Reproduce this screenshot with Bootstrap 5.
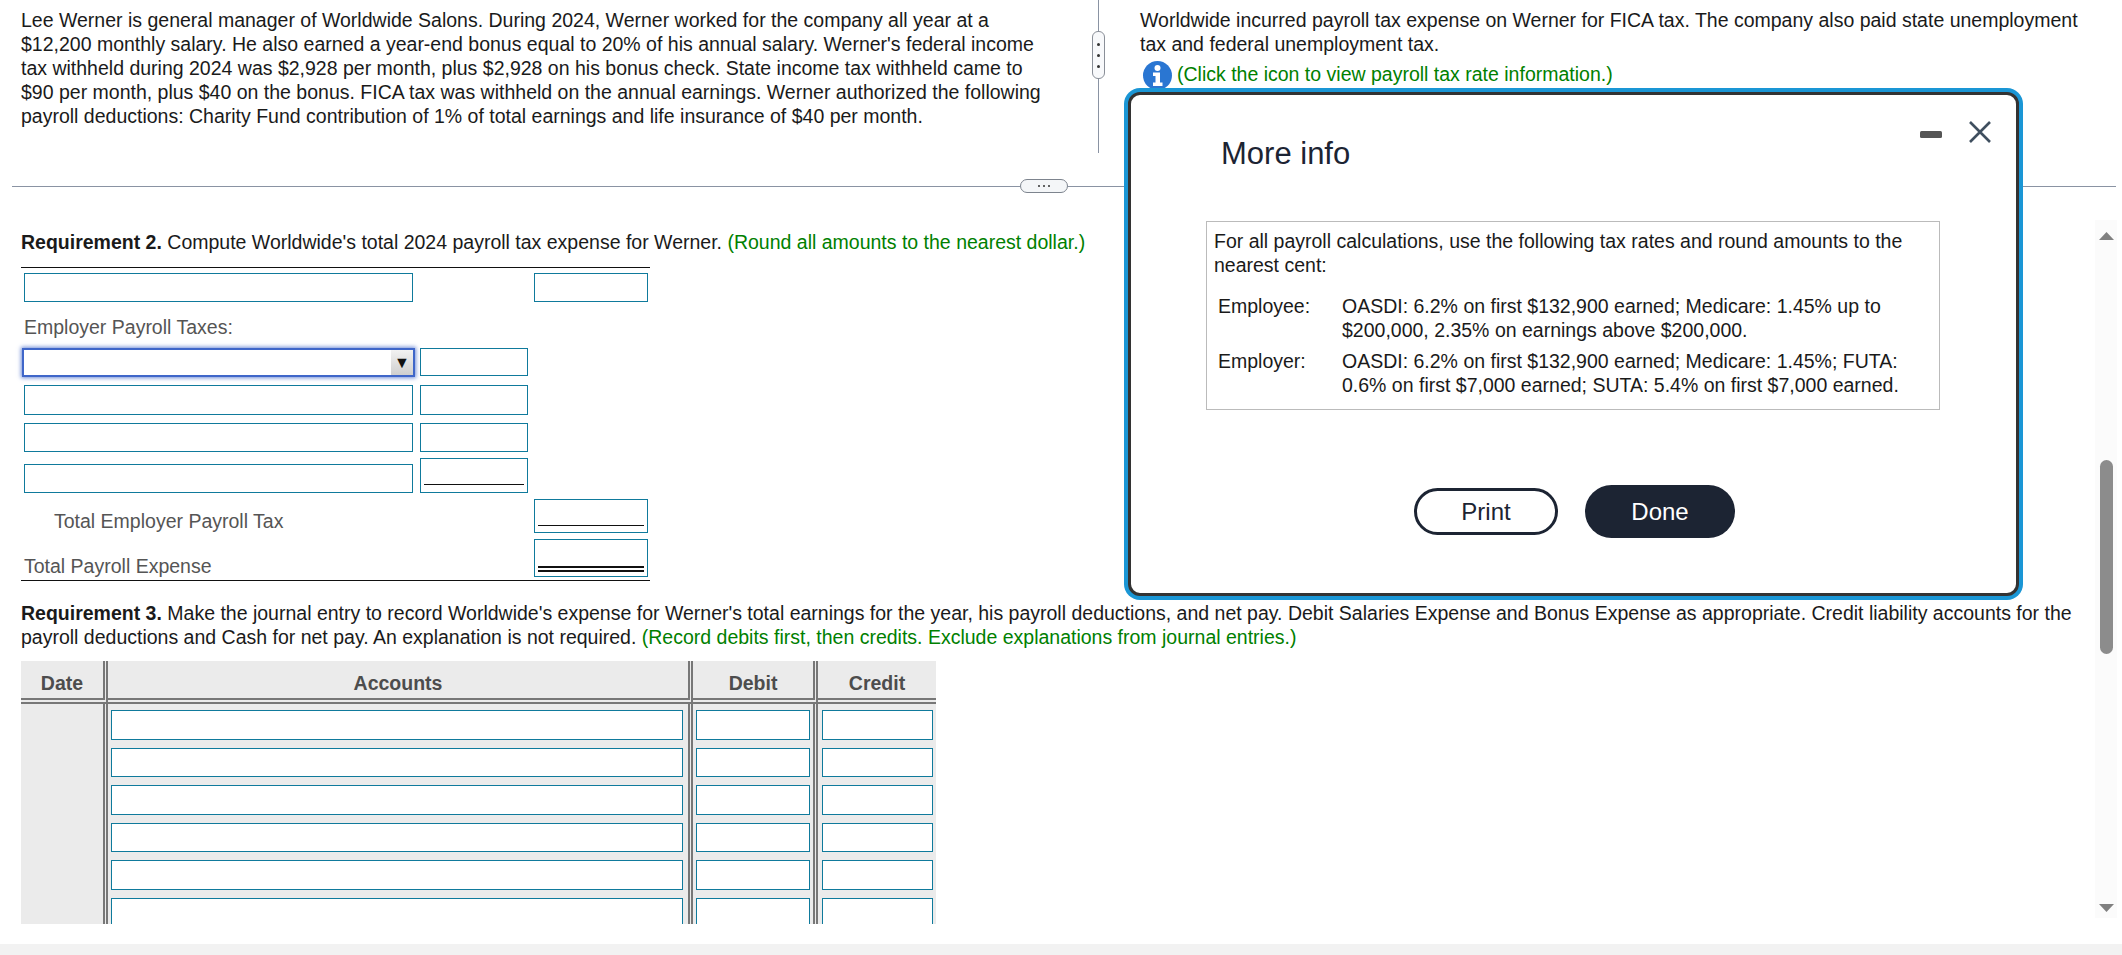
<!DOCTYPE html>
<html lang="en">
<head>
  <meta charset="UTF-8">
  <meta name="viewport" content="width=device-width, initial-scale=1.0">
  <title>Payroll tax expense</title>
  <link href="https://cdn.jsdelivr.net/npm/bootstrap@5.3.0/dist/css/bootstrap.min.css" rel="stylesheet">
  <style>
    html, body { height: 955px; overflow: hidden; }
    body { font-family: "Liberation Sans", Arial, sans-serif; font-size: 19.5px; line-height: 24px; color: #1a1a1a; background: #fff; }
    .page-main { height: 944px; }
    .page-foot { height: 11px; background: #f2f2f2; }
    .top-pane { height: 153px; }
    .story-left { width: 1092px; padding: 8px 45px 0 21px; }
    .split-v { width: 13px; }
    .split-line { width: 1px; background: #8a93a3; }
    .split-line.first { height: 31px; }
    .split-grip { width: 13px; height: 48px; border: 1px solid #8a8f98; border-radius: 6px; background: #f8f9fb; }
    .grip-dot { width: 3px; height: 3px; background: #333; border-radius: 50%; }
    .story-right { width: 990px; padding: 8px 0 0 35px; }
    .info-line { margin-top: 6px; margin-left: 3px; gap: 5px; }
    .info-line svg { margin-top: -1px; }
    .hint { color: #008000; }
    .rule-row { height: 14px; margin: 26px 6px 0 12px; }
    .rule-line { height: 1px; background: #8a93a3; }
    .rule-line.first { width: 1008px; flex: none; }
    .rule-grip { width: 48px; height: 14px; border: 1px solid #7d848e; border-radius: 7px; background: #f4f6f8; gap: 3px; }
    .rule-grip .grip-dot { width: 2px; height: 2px; }
    .lower-pane { height: 751px; }
    .work-col { width: 2095px; padding-left: 21px; }
    .req-two { margin-top: 37px; }
    .calc-box { width: 629px; margin-top: 13px; padding: 0 0 3px 3px; border-top: 1px solid #111; border-bottom: 1px solid #111; }
    .calc-row { gap: 7px; }
    .calc-wide { width: 389px; flex: none; }
    .calc-mid { width: 108px; flex: none; }
    .calc-far { width: 114px; margin-left: 114px; flex: none; }
    .calc-far2 { width: 114px; margin-left: auto; margin-right: 2px; flex: none; }
    .fld.form-control { border: 1px solid #0f7a9c; border-radius: 0; padding: 0; min-height: 0; background: #fff; }
    .calc-label { color: #555; white-space: nowrap; }
    .calc-indent { padding-left: 30px; }
    .calc-bump { margin-top: 10px; }
    .calc-drop { margin-bottom: -1px; }
    .h-29 { height: 29px; }
    .h-28 { height: 28px; }
    .row-a { margin-top: 5px; height: 29px; }
    .row-lbl { margin-top: 13px; height: 24px; }
    .row-b { margin-top: 9px; height: 29px; }
    .row-c { margin-top: 8px; height: 30px; }
    .row-d { margin-top: 8px; height: 29px; }
    .row-e { margin-top: 6px; height: 35px; }
    .row-f { margin-top: 6px; height: 34px; }
    .row-g { margin-top: 6px; height: 38px; }
    .combo { width: 393px; height: 29px; margin: 0 -2px 0 -2px; flex: none; border: 2px solid #3f66c9; box-shadow: 0 0 4px 1px rgba(63,102,201,.75); background: #fff; }
    .combo-btn { width: 22px; font-size: 16px; line-height: 1; color: #111; background: linear-gradient(#f2f2f2, #cfcfcf); }
    .sum-single { border-bottom: 1px solid #111; margin: 0 3px; }
    .sum-double { border-top: 2px solid #111; border-bottom: 2px solid #111; height: 6px; margin: 0 3px; }
    .total-lift { height: 26px; }
    .req-three { margin-top: 20px; margin-right: 10px; }
    .journal-clip { width: 915px; height: 263px; margin-top: 12px; overflow: hidden; background: #ebebeb; }
    .journal { width: 915px; table-layout: fixed; border-collapse: separate; border-spacing: 0; }
    .journal th { height: 43px; padding: 6px 0 0; text-align: center; color: #4d4d4d; font-weight: 700; border-bottom: 6px double #777; }
    .journal th, .journal td { border-right: 5px double #777; }
    .journal th:last-child, .journal td:last-child { border-right: 0; }
    .journal td { padding: 4px 5px 4px 3px; }
    .journal tr:first-child td { padding-top: 6px; }
    .journal td:nth-child(3) { padding-right: 3px; }
    .journal td:last-child { padding: 4px 3px 4px 4px; }
    .journal tr:first-child td:last-child { padding-top: 6px; }
    .journal .fld { display: block; width: 100%; height: 29px; }
    .journal tr:nth-child(odd) .fld { height: 30px; }
    .col-date { width: 87px; }
    .col-acct { width: 585px; }
    .col-debit { width: 125px; }
    .rail { width: 22px; height: 698px; margin-top: 27px; background: #fbfbfb; }
    .rail-up { margin-top: 12px; }
    .rail-thumb { width: 13px; height: 194px; margin-top: 220px; background: #8c8c8c; border-radius: 7px; }
    .rail-down { margin-top: auto; margin-bottom: 6px; }
    .info-modal { position: absolute; left: 1128px; top: 92px; width: 891px; height: 504px; z-index: 10; background: #fff; border: 3px solid #333; border-radius: 12px; box-shadow: 0 0 0 4px #1a96d5; }
    .modal-top { padding: 26px 25px 0 90px; }
    .modal-name { margin: 13px 0 0; font-size: 31px; line-height: 40px; font-weight: 400; color: #1c2433; }
    .modal-tools { gap: 27px; }
    .tool-btn { line-height: 0; background: none; }
    .rate-box { width: 734px; margin: 47px 0 0 75px; padding: 7px 8px 12px 7px; border: 1px solid #bbb; color: #1a1a1a; }
    .rate-row { padding-left: 4px; }
    .rate-row.first { margin-top: 17px; }
    .rate-row.second { margin-top: 7px; }
    .rate-name { width: 124px; flex: none; }
    .modal-btns { margin-top: 75px; padding-left: 2px; gap: 27px; height: 53px; }
    .pill-print.btn, .pill-done.btn { font-size: 24px; line-height: 1; padding: 0; border-radius: 24px; }
    .pill-print.btn { width: 144px; height: 47px; background: #fff; color: #1c2433; border: 3px solid #1c2433; }
    .pill-done.btn { width: 150px; height: 53px; background: #1c2433; color: #fff; border: 0; border-radius: 27px; }
  </style>
</head>
<body>
  <div class="page-main">
    <!-- problem text -->
    <div class="top-pane d-flex">
      <div class="story-left">Lee Werner is general manager of Worldwide Salons. During 2024, Werner worked for the company all year at a $12,200 monthly salary. He also earned a year-end bonus equal to 20% of his annual salary. Werner's federal income tax withheld during 2024 was $2,928 per month, plus $2,928 on his bonus check. State income tax withheld came to $90 per month, plus $40 on the bonus. FICA tax was withheld on the annual earnings. Werner authorized the following payroll deductions: Charity Fund contribution of 1% of total earnings and life insurance of $40 per month.</div>
      <div class="split-v d-flex flex-column align-items-center">
        <div class="split-line first"></div>
        <div class="split-grip d-flex flex-column align-items-center justify-content-center gap-2">
          <span class="grip-dot"></span><span class="grip-dot"></span><span class="grip-dot"></span>
        </div>
        <div class="split-line flex-grow-1"></div>
      </div>
      <div class="story-right">
        <div>Worldwide incurred payroll tax expense on Werner for FICA tax. The company also paid state unemployment tax and federal unemployment tax.</div>
        <div class="info-line d-flex">
          <svg width="29" height="29" viewBox="0 0 29 29" class="flex-shrink-0">
            <circle cx="14.5" cy="14.5" r="14.5" fill="#2a76d2"/>
            <circle cx="14.5" cy="7" r="3" fill="#fff"/>
            <path d="M10 11.5h7v10h2.5v3.5h-9.5v-3.5h2.5v-6.5h-2.5z" fill="#fff"/>
          </svg>
          <span class="hint">(Click the icon to view payroll tax rate information.)</span>
        </div>
      </div>
    </div>

    <div class="rule-row d-flex align-items-center">
      <div class="rule-line first"></div>
      <div class="rule-grip d-flex align-items-center justify-content-center flex-shrink-0">
        <span class="grip-dot"></span><span class="grip-dot"></span><span class="grip-dot"></span>
      </div>
      <div class="rule-line flex-grow-1"></div>
    </div>

    <div class="lower-pane d-flex">
      <div class="work-col">
        <div class="req-two"><b>Requirement 2.</b> Compute Worldwide's total 2024 payroll tax expense for Werner. <span class="hint">(Round all amounts to the nearest dollar.)</span></div>

        <div class="calc-box">
          <div class="calc-row row-a d-flex">
            <input class="fld form-control calc-wide" type="text">
            <input class="fld form-control calc-far" type="text">
          </div>
          <div class="row-lbl calc-label">Employer Payroll Taxes:</div>
          <div class="calc-row row-b d-flex">
            <div class="combo d-flex justify-content-end">
              <span class="combo-btn d-flex align-items-center justify-content-center">▼</span>
            </div>
            <input class="fld form-control calc-mid h-28" type="text">
          </div>
          <div class="calc-row row-c d-flex">
            <input class="fld form-control calc-wide" type="text">
            <input class="fld form-control calc-mid" type="text">
          </div>
          <div class="calc-row row-d d-flex">
            <input class="fld form-control calc-wide" type="text">
            <input class="fld form-control calc-mid" type="text">
          </div>
          <div class="calc-row row-e d-flex align-items-end">
            <input class="fld form-control calc-wide h-29" type="text">
            <div class="fld form-control calc-mid h-100"><div class="sum-single total-lift"></div></div>
          </div>
          <div class="row-f d-flex align-items-center">
            <div class="calc-label calc-indent calc-bump">Total Employer Payroll Tax</div>
            <div class="fld form-control calc-far2 h-100"><div class="sum-single total-lift"></div></div>
          </div>
          <div class="row-g d-flex align-items-end">
            <div class="calc-label calc-drop">Total Payroll Expense</div>
            <div class="fld form-control calc-far2 h-100"><div class="total-lift"></div><div class="sum-double"></div></div>
          </div>
        </div>

        <div class="req-three"><b>Requirement 3.</b> Make the journal entry to record Worldwide's expense for Werner's total earnings for the year, his payroll deductions, and net pay. Debit Salaries Expense and Bonus Expense as appropriate. Credit liability accounts for the payroll deductions and Cash for net pay. An explanation is not required. <span class="hint">(Record debits first, then credits. Exclude explanations from journal entries.)</span></div>

        <div class="journal-clip">
          <table class="journal">
            <colgroup>
              <col class="col-date"><col class="col-acct"><col class="col-debit"><col>
            </colgroup>
            <thead>
              <tr><th>Date</th><th>Accounts</th><th>Debit</th><th>Credit</th></tr>
            </thead>
            <tbody id="journalBody"></tbody>
          </table>
        </div>
      </div>

      <div class="rail d-flex flex-column align-items-center flex-shrink-0">
        <svg class="rail-up flex-shrink-0" width="15" height="8" viewBox="0 0 15 8"><path d="M7.5 0 15 8H0z" fill="#808080"/></svg>
        <div class="rail-thumb flex-shrink-0"></div>
        <svg class="rail-down flex-shrink-0" width="15" height="8" viewBox="0 0 15 8"><path d="M0 0h15L7.5 8z" fill="#808080"/></svg>
      </div>
    </div>
  </div>
  <div class="page-foot"></div>

  <!-- More info dialog -->
  <div class="info-modal">
    <div class="modal-top d-flex justify-content-between align-items-start">
      <h2 class="modal-name">More info</h2>
      <div class="modal-tools d-flex">
        <button class="tool-btn border-0 p-0" type="button" aria-label="Minimize">
          <svg width="22" height="22" viewBox="0 0 22 22"><rect x="0" y="10" width="22" height="7" rx="1.5" fill="#555"/></svg>
        </button>
        <button class="tool-btn border-0 p-0" type="button" aria-label="Close">
          <svg width="22" height="22" viewBox="0 0 22 22"><path d="M1 1 21 21M21 1 1 21" stroke="#3f4f5f" stroke-width="2.6" fill="none"/></svg>
        </button>
      </div>
    </div>
    <div class="rate-box">
      <div>For all payroll calculations, use the following tax rates and round amounts to the nearest cent:</div>
      <div class="rate-row first d-flex">
        <div class="rate-name">Employee:</div>
        <div>OASDI: 6.2% on first $132,900 earned; Medicare: 1.45% up to $200,000, 2.35% on earnings above $200,000.</div>
      </div>
      <div class="rate-row second d-flex">
        <div class="rate-name">Employer:</div>
        <div>OASDI: 6.2% on first $132,900 earned; Medicare: 1.45%; FUTA: 0.6% on first $7,000 earned; SUTA: 5.4% on first $7,000 earned.</div>
      </div>
    </div>
    <div class="modal-btns d-flex justify-content-center align-items-center">
      <button class="btn pill-print" type="button">Print</button>
      <button class="btn pill-done" type="button">Done</button>
    </div>
  </div>

  <script src="https://cdn.jsdelivr.net/npm/bootstrap@5.3.0/dist/js/bootstrap.bundle.min.js"></script>
  <script>
    // journal rows
    const journalBody = document.getElementById('journalBody');
    for (let i = 0; i < 6; i++) {
      const tr = document.createElement('tr');
      tr.innerHTML = '<td></td>' + '<td><input class="fld form-control" type="text"></td>'.repeat(3);
      journalBody.appendChild(tr);
    }
  </script>
</body>
</html>
